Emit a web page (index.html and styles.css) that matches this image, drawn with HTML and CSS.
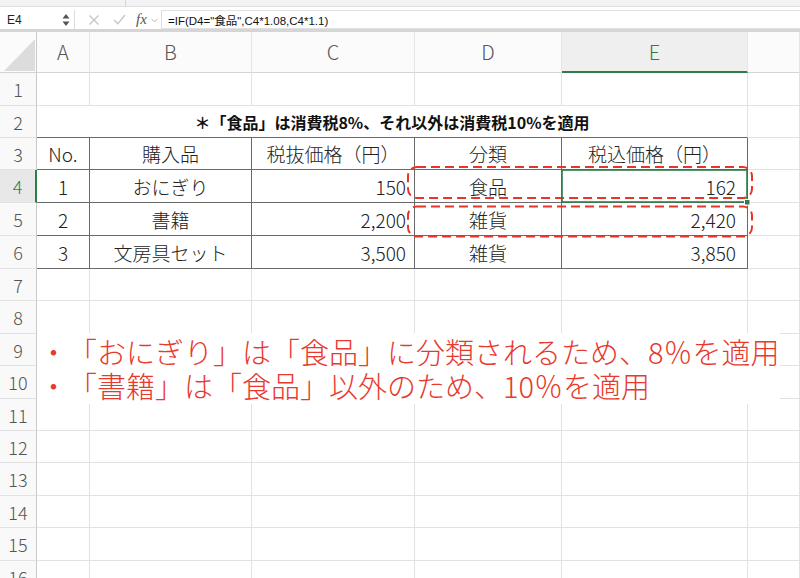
FILE: index.html
```html
<!DOCTYPE html>
<html lang="ja">
<head>
<meta charset="utf-8">
<title>Excel IF</title>
<link rel="stylesheet" href="styles.css">
</head>
<body>
<div class="app">
  <div class="topstrip"><div class="topstrip-left"></div></div>
  <div class="fbar">
    <div class="namebox">
      <span class="ref">E4</span>
      <svg class="spin" width="8" height="14" viewBox="0 0 8 14"><path d="M4 1 L7.5 5.5 H0.5 Z" fill="#555"/><path d="M4 13 L7.5 8.5 H0.5 Z" fill="#555"/></svg>
    </div>
    <div class="fbtns">
      <svg class="ico x" width="12" height="12" viewBox="0 0 12 12"><path d="M1.5 1.5 L10.5 10.5 M10.5 1.5 L1.5 10.5" stroke="#c4c4c4" stroke-width="1.3" fill="none"/></svg>
      <svg class="ico ok" width="13" height="11" viewBox="0 0 13 11"><path d="M1 6 L4.8 9.8 L12 1" stroke="#c4c4c4" stroke-width="1.3" fill="none"/></svg>
      <span class="fx">fx</span>
      <svg class="chev" width="7" height="5" viewBox="0 0 7 5"><path d="M0.5 0.8 L3.5 4 L6.5 0.8" stroke="#b8b8b8" stroke-width="1" fill="none"/></svg>
    </div>
    <div class="finput">=IF(D4="食品",C4*1.08,C4*1.1)</div>
  </div>
  <div class="band"></div>

  <div class="grid">
    <div class="c corner"><div class="tri"></div></div>
    <div class="c ch">A</div>
    <div class="c ch">B</div>
    <div class="c ch">C</div>
    <div class="c ch">D</div>
    <div class="c ch sel">E</div>
    <div class="c ch"></div>

    <div class="c rh">1</div>
    <div class="c"></div><div class="c"></div><div class="c"></div><div class="c"></div><div class="c"></div><div class="c"></div>

    <div class="c rh">2</div>
    <div class="c title tt">＊「食品」は消費税8%、それ以外は消費税10%を適用</div>
    <div class="c"></div>

    <div class="c rh">3</div>
    <div class="c t ctr">No.</div>
    <div class="c t ctr">購入品</div>
    <div class="c t ctr">税抜価格（円）</div>
    <div class="c t ctr">分類</div>
    <div class="c t ctr">税込価格（円）</div>
    <div class="c"></div>

    <div class="c rh sel">4</div>
    <div class="c t ctr">1</div>
    <div class="c t ctr">おにぎり</div>
    <div class="c t num">150</div>
    <div class="c t ctr">食品</div>
    <div class="c t num e">162</div>
    <div class="c"></div>

    <div class="c rh">5</div>
    <div class="c t ctr">2</div>
    <div class="c t ctr">書籍</div>
    <div class="c t num">2,200</div>
    <div class="c t ctr">雑貨</div>
    <div class="c t num e">2,420</div>
    <div class="c"></div>

    <div class="c rh">6</div>
    <div class="c t ctr">3</div>
    <div class="c t ctr">文房具セット</div>
    <div class="c t num">3,500</div>
    <div class="c t ctr">雑貨</div>
    <div class="c t num e">3,850</div>
    <div class="c"></div>

    <div class="c rh">7</div>
    <div class="c"></div><div class="c"></div><div class="c"></div><div class="c"></div><div class="c"></div><div class="c"></div>
    <div class="c rh">8</div>
    <div class="c"></div><div class="c"></div><div class="c"></div><div class="c"></div><div class="c"></div><div class="c"></div>
    <div class="c rh">9</div>
    <div class="c"></div><div class="c"></div><div class="c"></div><div class="c"></div><div class="c"></div><div class="c"></div>
    <div class="c rh">10</div>
    <div class="c"></div><div class="c"></div><div class="c"></div><div class="c"></div><div class="c"></div><div class="c"></div>
    <div class="c rh">11</div>
    <div class="c"></div><div class="c"></div><div class="c"></div><div class="c"></div><div class="c"></div><div class="c"></div>
    <div class="c rh">12</div>
    <div class="c"></div><div class="c"></div><div class="c"></div><div class="c"></div><div class="c"></div><div class="c"></div>
    <div class="c rh">13</div>
    <div class="c"></div><div class="c"></div><div class="c"></div><div class="c"></div><div class="c"></div><div class="c"></div>
    <div class="c rh">14</div>
    <div class="c"></div><div class="c"></div><div class="c"></div><div class="c"></div><div class="c"></div><div class="c"></div>
    <div class="c rh">15</div>
    <div class="c"></div><div class="c"></div><div class="c"></div><div class="c"></div><div class="c"></div><div class="c"></div>
    <div class="c rh">16</div>
    <div class="c"></div><div class="c"></div><div class="c"></div><div class="c"></div><div class="c"></div><div class="c"></div>
  </div>

  <div class="note">
    <div class="line">・「おにぎり」は「食品」に分類されるため、8％を適用</div>
    <div class="line">・「書籍」は「食品」以外のため、10％を適用</div>
  </div>

  <svg class="marks" width="800" height="578" viewBox="0 0 800 578">
    <rect x="408" y="167" width="344" height="31" rx="9" ry="9" fill="none" stroke="#e8352b" stroke-width="2" stroke-dasharray="9 5"/>
    <rect x="408" y="206.5" width="344" height="30" rx="9" ry="9" fill="none" stroke="#e8352b" stroke-width="2" stroke-dasharray="9 5"/>
    <rect x="562" y="170" width="185" height="32" fill="none" stroke="#2f7d46" stroke-width="1.6"/>
    <rect x="744.5" y="199.5" width="5.5" height="5.5" fill="#2f7d46" stroke="#ffffff" stroke-width="1"/>
  </svg>
</div>
</body>
</html>
```

FILE: styles.css
```css
* { box-sizing: border-box; }
html, body { margin: 0; padding: 0; }
body {
  width: 800px;
  height: 578px;
  overflow: hidden;
  background: #ffffff;
  font-family: "Noto Sans CJK JP", "Noto Sans", sans-serif;
  text-spacing-trim: space-all;
}
.app {
  position: relative;
  width: 800px;
  height: 578px;
  overflow: hidden;
}

/* top strip */
.topstrip {
  height: 7px;
  background: #f3f3f3;
  border-bottom: 1px solid #dedede;
  display: flex;
}
.topstrip-left {
  width: 126px;
  border-right: 1px solid #d6d6d6;
}

/* formula bar */
.fbar {
  height: 22px;
  display: flex;
  background: #ffffff;
}
.namebox {
  width: 75px;
  margin-top: 3px;
  display: flex;
  align-items: center;
  justify-content: space-between;
  padding: 0 4px 0 7px;
  border-right: 1px solid #dcdcdc;
}
.ref {
  font-family: "Liberation Sans", "Noto Sans CJK JP", sans-serif;
  font-size: 12px;
  color: #222;
}
.spin { display: block; }
.fbtns {
  width: 86px;
  display: flex;
  align-items: center;
  padding-left: 13px;
  padding-top: 3px;
}
.ico { display: block; }
.x { margin-right: 13px; }
.ok { margin-right: 10px; }
.fx {
  font-family: "Liberation Serif", serif;
  font-style: italic;
  font-size: 15px;
  color: #555;
  margin-right: 4px;
  line-height: 1;
}
.chev { display: block; margin-top: 2px; }
.finput {
  flex: 1;
  margin-top: 3px;
  border-top: 1px solid #e1e1e1;
  border-bottom: 1px solid #e1e1e1;
  border-left: 1px solid #dcdcdc;
  padding-left: 6px;
  display: flex;
  align-items: center;
  font-family: "Liberation Sans", "Noto Sans CJK JP", sans-serif;
  font-size: 11.5px;
  color: #111;
  white-space: nowrap;
}
.band {
  height: 3px;
  background: #d5d5d5;
}

/* sheet grid */
.grid {
  display: grid;
  grid-template-columns: 37px 53px 162px 163px 147px 186px 52px;
  grid-template-rows: 41px 33px 32px 32px 33px 33px 33px 32px 33px 32px 33px 32px 32px 33px 32px 33px 32px;
}
.c {
  border-right: 1px solid #e2e2e2;
  border-bottom: 1px solid #e2e2e2;
  display: flex;
  align-items: center;
  font-size: 19px;
  font-weight: 300;
  line-height: 1;
  color: #222;
  white-space: nowrap;
  overflow: hidden;
  padding: 0 8px;
}
.ctr { justify-content: center; }
.num { justify-content: flex-end; padding-right: 8px; }
.num.e { padding-right: 11px; }

.corner {
  background: #fbfbfb;
  border-right: 1px solid #c9c9c9;
  border-bottom: 1px solid #d4d4d4;
  padding: 0;
  align-items: flex-end;
  justify-content: flex-end;
}
.tri {
  width: 31px;
  height: 32px;
  margin: 0 1px 1px 0;
  background: #dcdcdc;
  clip-path: polygon(100% 0, 100% 100%, 0 100%);
}
.ch {
  background: #fbfbfb;
  color: #555;
  font-size: 20px;
  justify-content: center;
  border-bottom: 1px solid #d4d4d4;
  border-right: 1px solid #e6e6e6;
}
.ch.sel {
  background: #efefef;
  color: #2f7d46;
  border-bottom: 2px solid #2f7d46;
}
.rh {
  background: #f9f9f9;
  color: #555;
  font-size: 18px;
  justify-content: center;
  padding: 0;
  border-right: 1px solid #c9c9c9;
}
.rh.sel {
  background: #e8e8e8;
  color: #2f7d46;
  border-right: 2px solid #2f7d46;
}
.title {
  grid-column: span 5;
  justify-content: center;
  font-size: 16px;
  font-weight: 700;
  color: #111;
}
.tt { border-bottom-color: #6a6a6a; }
.t {
  border-right-color: #6a6a6a;
  border-bottom-color: #6a6a6a;
}

/* text box */
.note {
  position: absolute;
  left: 37px;
  top: 333px;
  width: 743px;
  height: 71px;
  background: #ffffff;
  color: #e8392d;
  font-size: 29px;
  font-weight: 300;
  padding-top: 1px;
  padding-left: 2px;
  white-space: nowrap;
}
.line {
  height: 34px;
  line-height: 34px;
}

.marks {
  position: absolute;
  left: 0;
  top: 0;
  pointer-events: none;
}
```
